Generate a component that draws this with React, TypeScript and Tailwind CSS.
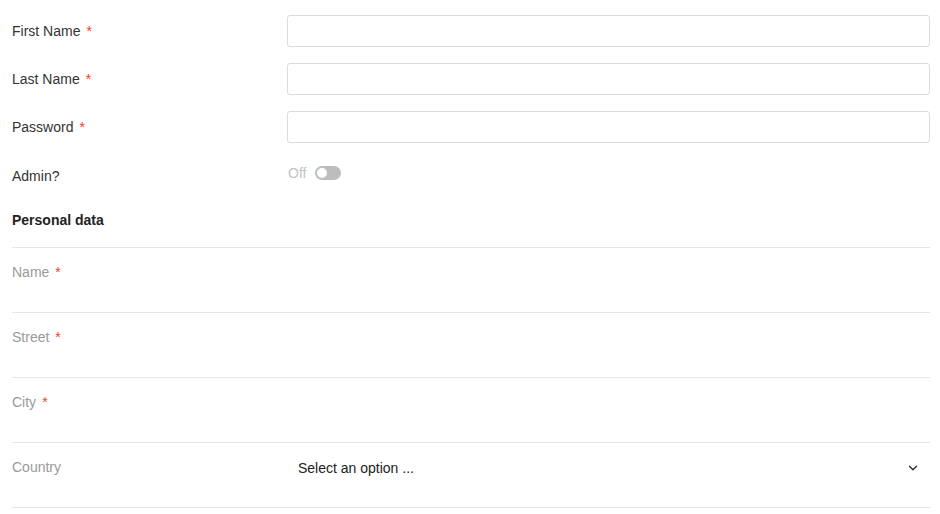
import { ChevronDown } from "lucide-react";

function Req() {
  return <span className="ml-[6px] text-[#f5402c]">*</span>;
}

function InputRow({ label }: { label: string }) {
  return (
    <div className="grid h-12 grid-cols-[275px_1fr] items-center">
      <label className="text-[14px] text-[#333]">
        {label}
        <Req />
      </label>
      <input className="h-8 w-full rounded-[3px] border border-[#dcdcdc] bg-white px-2 text-[14px] outline-none" />
    </div>
  );
}

function DataRow({ label, required, children }: { label: string; required?: boolean; children?: React.ReactNode }) {
  return (
    <div className="grid h-[65px] grid-cols-[275px_1fr] border-b border-[#e6e6e6]">
      <div className="pt-[14px] text-[14px] text-[#9a9a9a]">
        {label}
        {required && <Req />}
      </div>
      <div className="pt-[9px]">{children}</div>
    </div>
  );
}

export default function App() {
  return (
    <div
      className="min-h-[514px] bg-white pt-[7px] pl-3 pr-[10px] text-[#333]"
      style={{ fontFamily: '"Liberation Sans", Arial, sans-serif' }}
    >
      <InputRow label="First Name" />
      <InputRow label="Last Name" />
      <InputRow label="Password" />
      <div className="grid h-12 grid-cols-[275px_1fr] items-center">
        <span className="pt-[3px] text-[14px] text-[#333]">Admin?</span>
        <div className="flex items-center gap-[9px] pb-[4px] pl-[1px]">
          <span className="mt-[1px] text-[14px] text-[#c4c4c4]">Off</span>
          <button className="flex h-[14px] w-[26px] items-center rounded-full bg-[#bdbdbd] px-[2px]">
            <span className="h-[10px] w-[10px] rounded-full bg-white" />
          </button>
        </div>
      </div>
      <div className="h-[49px] border-b border-[#e6e6e6] pt-[11px] text-[14px] font-bold text-[#222]">
        Personal data
      </div>
      <DataRow label="Name" required />
      <DataRow label="Street" required />
      <DataRow label="City" required />
      <DataRow label="Country">
        <div className="flex h-8 items-center justify-between pl-[11px] pr-[10px] text-[14px] text-[#222]">
          <span>Select an option ...</span>
          <ChevronDown className="h-[14px] w-[14px] text-[#333]" strokeWidth={2.5} />
        </div>
      </DataRow>
    </div>
  );
}
